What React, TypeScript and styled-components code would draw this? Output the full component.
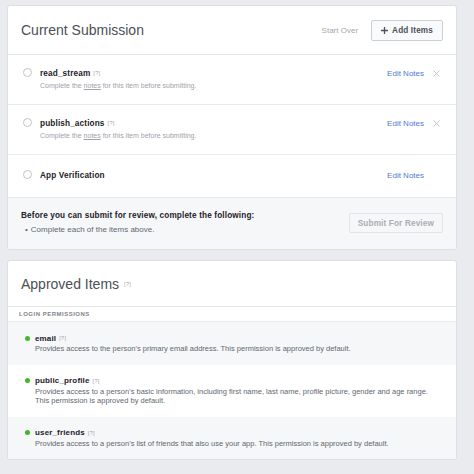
import React from 'react';
import styled, {createGlobalStyle} from 'styled-components';

const GlobalStyle = createGlobalStyle`
  body {
    margin: 0;
    background: #e9ebee;
    font-family: "Liberation Sans", Arial, sans-serif;
    color: #4b4f56;
  }
`;

const Page = styled.div`
  display: flex;
  flex-direction: column;
  gap: 10px;
  width: 450px;
  padding: 5px 17px 20px 7px;
`;

const Card = styled.section`
  background: #fff;
  border: 1px solid #dddfe2;
  border-radius: 3px;
  overflow: hidden;
`;

const Header = styled.div<{height: number}>`
  display: flex;
  align-items: center;
  justify-content: space-between;
  height: ${props => props.height}px;
  padding: 0 13px 0 13px;
  border-bottom: 1px solid #e5e6e9;
`;

const Title = styled.h2`
  margin: 0;
  font-size: 14px;
  font-weight: normal;
  color: #4b4f56;
  display: flex;
  align-items: center;
  gap: 5px;
`;

const Help = styled.span`
  font-size: 5.5px;
  font-weight: normal;
  color: #9ea2a9;
  letter-spacing: 0.3px;
`;

const HeaderActions = styled.div`
  display: flex;
  align-items: center;
  gap: 13px;
`;

const TextLink = styled.span`
  font-size: 8px;
  color: #a3a7ae;
`;

const Button = styled.button<{disabled?: boolean}>`
  display: flex;
  align-items: center;
  gap: 4px;
  height: ${props => (props.disabled ? 20 : 21)}px;
  padding: 0 ${props => (props.disabled ? 8 : 9)}px;
  border: 1px solid ${props => (props.disabled ? '#e3e5e8' : '#ccd0d5')};
  border-radius: 2px;
  background: ${props => (props.disabled ? '#f6f7f9' : '#f9fafb')};
  font-family: inherit;
  font-size: 8.2px;
  font-weight: bold;
  letter-spacing: 0.15px;
  color: ${props => (props.disabled ? '#a9adb4' : '#4b4f56')};
`;

const Item = styled.div<{last?: boolean}>`
  display: flex;
  align-items: flex-start;
  padding: ${props => (props.last ? '14px 16px 16px 15px' : '12px 16px 12px 15px')};
  border-bottom: 1px solid #e9eaed;
`;

const Radio = styled.span`
  flex: none;
  width: 9px;
  height: 9px;
  margin-top: 1px;
  border: 1px solid #bec2c9;
  border-radius: 50%;
  box-sizing: border-box;
`;

const ItemBody = styled.div`
  flex: 1;
  margin-left: 8px;
`;

const ItemName = styled.div`
  display: flex;
  align-items: center;
  gap: 3px;
  height: 12px;
  font-size: 8.2px;
  font-weight: bold;
  letter-spacing: 0.15px;
  color: #1d2129;
`;

const ItemNote = styled.div`
  margin-top: 1px;
  line-height: 12px;
  font-size: 7px;
  color: #9ea2a9;

  u {
    text-decoration-color: #9ea2a9;
  }
`;

const ItemActions = styled.div`
  display: flex;
  align-items: center;
  gap: 9px;
  height: 12px;
`;

const EditLink = styled.span`
  font-size: 8px;
  color: #4f79d3;
`;

const Close = styled.span<{hidden?: boolean}>`
  display: flex;
  width: 7px;
  visibility: ${props => (props.hidden ? 'hidden' : 'visible')};
`;

const Footer = styled.div`
  display: flex;
  align-items: center;
  justify-content: space-between;
  padding: 12px 13px 13px 13px;
  background: #f6f7f9;
`;

const FooterTitle = styled.div`
  line-height: 12px;
  font-size: 8.2px;
  font-weight: bold;
  letter-spacing: 0.15px;
  color: #1d2129;
`;

const FooterList = styled.ul`
  margin: 2px 0 0;
  padding: 0 0 0 4px;
  list-style: none;
  line-height: 12px;
  font-size: 8px;
  color: #616770;

  li::before {
    content: '•';
    margin-right: 3px;
  }
`;

const SectionLabel = styled.div`
  height: 14px;
  padding-left: 11px;
  display: flex;
  align-items: center;
  border-bottom: 1px solid #e9eaed;
  font-size: 6px;
  font-weight: bold;
  letter-spacing: 0.5px;
  color: #7f838a;
`;

const Permission = styled.div<{shaded: boolean}>`
  display: flex;
  align-items: flex-start;
  padding: 10px 16px 11px 17px;
  background: ${props => (props.shaded ? '#f6f7f9' : '#fff')};
`;

const Dot = styled.span`
  flex: none;
  width: 5px;
  height: 5px;
  margin-top: 3.5px;
  border-radius: 50%;
  background: #42b72a;
`;

const PermissionBody = styled.div`
  flex: 1;
  margin-left: 5px;
`;

const PermissionName = styled(ItemName)`
  height: 12px;
  font-size: 8px;
`;

const PermissionText = styled.div`
  line-height: 9.5px;
  font-size: 7.5px;
  color: #616770;
`;

const CloseIcon = () => (
  <svg width="7" height="7" viewBox="0 0 7 7">
    <path d="M0.5 0.5 L6.5 6.5 M6.5 0.5 L0.5 6.5" stroke="#bec2c9" strokeWidth="1" />
  </svg>
);

const PlusIcon = () => (
  <svg width="7" height="7" viewBox="0 0 7 7">
    <path d="M3.5 0 V7 M0 3.5 H7" stroke="#4b4f56" strokeWidth="1.3" />
  </svg>
);

const submissionItems = [
  {name: 'read_stream', note: true, removable: true},
  {name: 'publish_actions', note: true, removable: true},
  {name: 'App Verification', note: false, removable: false},
];

const approvedItems = [
  {
    name: 'email',
    text: "Provides access to the person's primary email address. This permission is approved by default.",
  },
  {
    name: 'public_profile',
    text: "Provides access to a person's basic information, including first name, last name, profile picture, gender and age range. This permission is approved by default.",
  },
  {
    name: 'user_friends',
    text: "Provides access to a person's list of friends that also use your app. This permission is approved by default.",
  },
];

function App() {
  return (
    <>
      <GlobalStyle />
      <Page>
        <Card>
          <Header height={48}>
            <Title>Current Submission</Title>
            <HeaderActions>
              <TextLink>Start Over</TextLink>
              <Button>
                <PlusIcon />
                Add Items
              </Button>
            </HeaderActions>
          </Header>

          {submissionItems.map((item, i) => (
            <Item key={item.name} last={i === submissionItems.length - 1}>
              <Radio />
              <ItemBody>
                <ItemName>
                  {item.name}
                  {item.note && <Help>[?]</Help>}
                </ItemName>
                {item.note && (
                  <ItemNote>
                    Complete the <u>notes</u> for this item before submitting.
                  </ItemNote>
                )}
              </ItemBody>
              <ItemActions>
                <EditLink>Edit Notes</EditLink>
                <Close hidden={!item.removable}>
                  <CloseIcon />
                </Close>
              </ItemActions>
            </Item>
          ))}

          <Footer>
            <div>
              <FooterTitle>Before you can submit for review, complete the following:</FooterTitle>
              <FooterList>
                <li>Complete each of the items above.</li>
              </FooterList>
            </div>
            <Button disabled>Submit For Review</Button>
          </Footer>
        </Card>

        <Card>
          <Header height={45}>
            <Title>
              Approved Items <Help>[?]</Help>
            </Title>
          </Header>
          <SectionLabel>LOGIN PERMISSIONS</SectionLabel>
          {approvedItems.map((item, i) => (
            <Permission key={item.name} shaded={i % 2 === 0}>
              <Dot />
              <PermissionBody>
                <PermissionName>
                  {item.name}
                  <Help>[?]</Help>
                </PermissionName>
                <PermissionText>{item.text}</PermissionText>
              </PermissionBody>
            </Permission>
          ))}
        </Card>
      </Page>
    </>
  );
}

export default App;
